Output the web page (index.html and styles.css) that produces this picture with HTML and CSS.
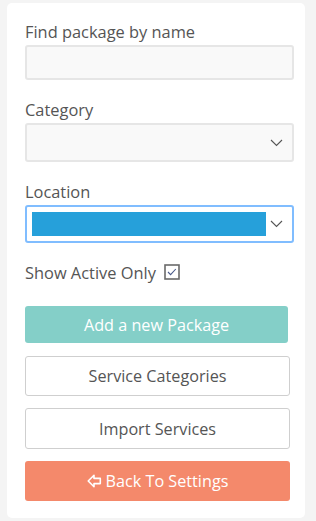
FILE: index.html
```html
<!DOCTYPE html>
<html lang="en">
<head>
  <meta charset="UTF-8">
  <title>Packages</title>
  <link rel="stylesheet" href="styles.css">
</head>
<body>

  <!-- Panneau de filtres des packages -->
  <div class="card">

    <div class="field">
      <label class="label">Find package by name</label>
      <div class="input"></div>
    </div>

    <div class="field">
      <label class="label">Category</label>
      <div class="select">
        <svg class="chevron" width="13" height="8" viewBox="0 0 13 8"><path d="M1 1l5.5 5.5L12 1" fill="none" stroke="#555" stroke-width="1.1"/></svg>
      </div>
    </div>

    <div class="field">
      <label class="label">Location</label>
      <div class="select focus">
        <span class="selected"></span>
        <svg class="chevron" width="13" height="8" viewBox="0 0 13 8"><path d="M1 1l5.5 5.5L12 1" fill="none" stroke="#555" stroke-width="1.1"/></svg>
      </div>
    </div>

    <div class="check-row">
      <span>Show Active Only</span>
      <svg width="16" height="16" viewBox="0 0 16 16">
        <rect x="1" y="1" width="14" height="14" fill="#fff" stroke="#6a6a6a" stroke-width="1.6"/>
        <path d="M4 8l2.6 2.6L11.8 5" fill="none" stroke="#4a5a8a" stroke-width="1.1"/>
      </svg>
    </div>

    <!-- Boutons d'action -->
    <div class="buttons">
      <button class="btn btn-teal">Add a new Package</button>
      <button class="btn btn-outline">Service Categories</button>
      <button class="btn btn-outline tall">Import Services</button>
      <button class="btn btn-orange">
        <svg width="15" height="14" viewBox="0 0 15 14"><path d="M1.2 7L7 1.3V4.4h6.3v5.2H7v3.1z" fill="none" stroke="#fff" stroke-width="1.6" stroke-linejoin="round"/></svg>
        Back To Settings
      </button>
    </div>

  </div>

</body>
</html>
```

FILE: styles.css
```css
/* Style de base */
body {
  margin: 0;
  padding: 3px 11px 3px 7px;
  background-color: #f4f4f4;
  font-family: "Open Sans", sans-serif;
  color: #555;
}

.card {
  background-color: #fff;
  border-radius: 5px;
  padding: 19px 11px 17px 18px;
  display: flex;
  flex-direction: column;
}

/* Champs du formulaire */
.field {
  display: flex;
  flex-direction: column;
  margin-bottom: 20px;
}

.label {
  font-size: 16.4px;
  line-height: 20px;
  margin-bottom: 3px;
  color: #555;
}

.input {
  height: 31px;
  background-color: #f9f9f9;
  border: 2px solid #e6e6e6;
  border-radius: 3px;
}

.select {
  height: 35px;
  background-color: #f9f9f9;
  border: 2px solid #e6e6e6;
  border-radius: 3px;
  display: flex;
  align-items: center;
  justify-content: flex-end;
  padding: 0 9px 0 5px;
}

.select.focus {
  height: 34px;
  background-color: #fff;
  border-color: #80bdff;
  justify-content: space-between;
}

.selected {
  width: 234px;
  height: 24px;
  background-color: #26a0da;
}

.chevron {
  display: block;
}

/* Case à cocher */
.check-row {
  display: flex;
  align-items: center;
  gap: 8px;
  font-size: 16.4px;
  line-height: 20px;
}

.check-row svg {
  margin-top: -2px;
}

/* Boutons */
.buttons {
  display: flex;
  flex-direction: column;
  align-items: flex-start;
  gap: 12px;
  margin-top: 23px;
}

.btn {
  font-family: inherit;
  font-size: 16.2px;
  width: 265px;
  height: 40px;
  border-radius: 3px;
  border: 1px solid transparent;
  display: flex;
  align-items: center;
  justify-content: center;
  gap: 4px;
  padding: 0;
}

.btn-teal {
  height: 37px;
  width: 263px;
  background-color: #84cfc8;
  color: #fff;
  margin-bottom: 1px;
}

.btn-outline {
  background-color: #fff;
  border-color: #cfcfcf;
  color: #555;
}

.btn-outline.tall {
  height: 41px;
}

.btn-orange {
  background-color: #f4896b;
  color: #fff;
}
```
